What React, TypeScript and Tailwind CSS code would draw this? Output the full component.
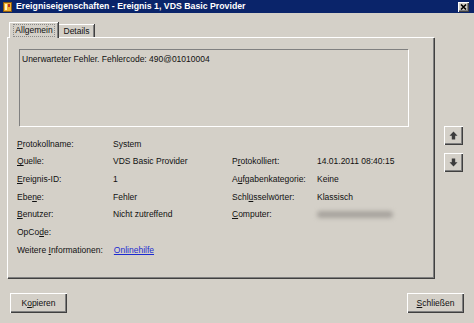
import React from "react";

const raised =
  "shadow-[inset_1px_1px_0_#ffffff,inset_-1px_-1px_0_#404040,inset_-2px_-2px_0_#808080]";

function U({ children }: { children: React.ReactNode }) {
  return <span className="underline underline-offset-[1px]">{children}</span>;
}

function Arrow({ down }: { down?: boolean }) {
  return (
    <svg width="9" height="9" viewBox="0 0 9 9" className={down ? "rotate-180" : ""}>
      <path d="M4.5 0.5 L8.5 4.8 H6.2 V8.5 H2.8 V4.8 H0.5 Z" fill="#3c3c3c" />
    </svg>
  );
}

export default function App() {
  return (
    <div className="w-[474px] h-[323px] bg-[#d4d0c8] flex flex-col overflow-hidden font-['Liberation_Sans',Arial,sans-serif] text-[8.5px] text-[#111] leading-none">
      {/* title bar */}
      <div className="h-[13px] bg-[#0a246a] flex items-center pl-[3px] pr-[5px]">
        <svg width="9" height="10" viewBox="0 0 9 10" className="mr-[4px]">
          <rect x="0.5" y="0.5" width="8" height="9" fill="#f0b030" stroke="#8a5a10" strokeWidth="1" />
          <rect x="2" y="2" width="2" height="6" fill="#fff2c0" />
          <rect x="5" y="2" width="2" height="3" fill="#c03020" />
        </svg>
        <span className="text-white font-bold text-[8.75px]">
          Ereigniseigenschaften - Ereignis 1, VDS Basic Provider
        </span>
        <div className={`ml-auto w-[11px] h-[10px] bg-[#d4d0c8] flex items-center justify-center ${raised}`}>
          <svg width="7" height="6" viewBox="0 0 7 6">
            <path d="M1 0.5 L6 5.5 M6 0.5 L1 5.5" stroke="#000" strokeWidth="1.6" />
          </svg>
        </div>
      </div>

      <div className="flex">
        {/* tabs + panel */}
        <div className="ml-[7px] mt-[8px] flex flex-col">
          <div className="flex items-end h-[16px] pl-[2px]">
            <div className="h-[16px] w-[49px] bg-[#d4d0c8] border-l border-t border-white shadow-[inset_-1px_0_0_#808080,1px_0_0_#404040] relative z-10 -mb-[1px] flex items-center justify-center">
              <span className="outline outline-1 outline-dotted outline-[#8a8a8a] px-[1px] py-[1px]">Allgemein</span>
            </div>
            <div className="h-[13px] w-[35px] border-t border-white shadow-[inset_-1px_0_0_#808080,1px_0_0_#404040] flex items-center justify-center ml-[1px]">
              Details
            </div>
          </div>
          <div className="w-[427px] h-[241px] border-l border-t border-white shadow-[inset_-1px_-1px_0_#808080,1px_1px_0_#404040] flex flex-col">
            <div className="ml-[11px] mt-[11px] w-[389px] h-[77px] border-t border-l border-[#808080] shadow-[1px_1px_0_#ffffff] px-[2px] pt-[5px]">
              Unerwarteter Fehler. Fehlercode: 490@01010004
            </div>
            <div className="grid grid-cols-[96px_119px_85px_1fr] auto-rows-[17.7px] items-center pl-[9px] mt-[9px]">
              <div><U>P</U>rotokollname:</div>
              <div>System</div>
              <div />
              <div />

              <div><U>Q</U>uelle:</div>
              <div>VDS Basic Provider</div>
              <div>P<U>r</U>otokolliert:</div>
              <div>14.01.2011 08:40:15</div>

              <div><U>E</U>reignis-ID:</div>
              <div>1</div>
              <div>A<U>u</U>fgabenkategorie:</div>
              <div>Keine</div>

              <div>Ebe<U>n</U>e:</div>
              <div>Fehler</div>
              <div>Schl<U>ü</U>sselwörter:</div>
              <div>Klassisch</div>

              <div><U>B</U>enutzer:</div>
              <div>Nicht zutreffend</div>
              <div><U>C</U>omputer:</div>
              <div className="w-[76px] h-[7px] rounded-full bg-[#a8a49e] blur-[2px]" />

              <div>OpCo<U>d</U>e:</div>
              <div />
              <div />
              <div />

              <div className="col-span-4 flex items-center">
                <span>Weitere <U>I</U>nformationen:</span>
                <span className="ml-[11px] text-[#1c2bd0] underline underline-offset-[1px]">Onlinehilfe</span>
              </div>
            </div>
          </div>
        </div>

        {/* navigation arrows */}
        <div className="ml-[10px] mt-[113px] flex flex-col gap-[8px]">
          <div className={`w-[19px] h-[19px] flex items-center justify-center ${raised}`}>
            <Arrow />
          </div>
          <div className={`w-[19px] h-[19px] flex items-center justify-center ${raised}`}>
            <Arrow down />
          </div>
        </div>
      </div>

      {/* bottom buttons */}
      <div className="flex justify-between px-[10px] mt-[15px]">
        <div className={`w-[57px] h-[20px] flex items-center justify-center ${raised}`}>
          <span>K<U>o</U>pieren</span>
        </div>
        <div className={`w-[57px] h-[20px] flex items-center justify-center ${raised}`}>
          <span><U>S</U>chließen</span>
        </div>
      </div>
    </div>
  );
}
